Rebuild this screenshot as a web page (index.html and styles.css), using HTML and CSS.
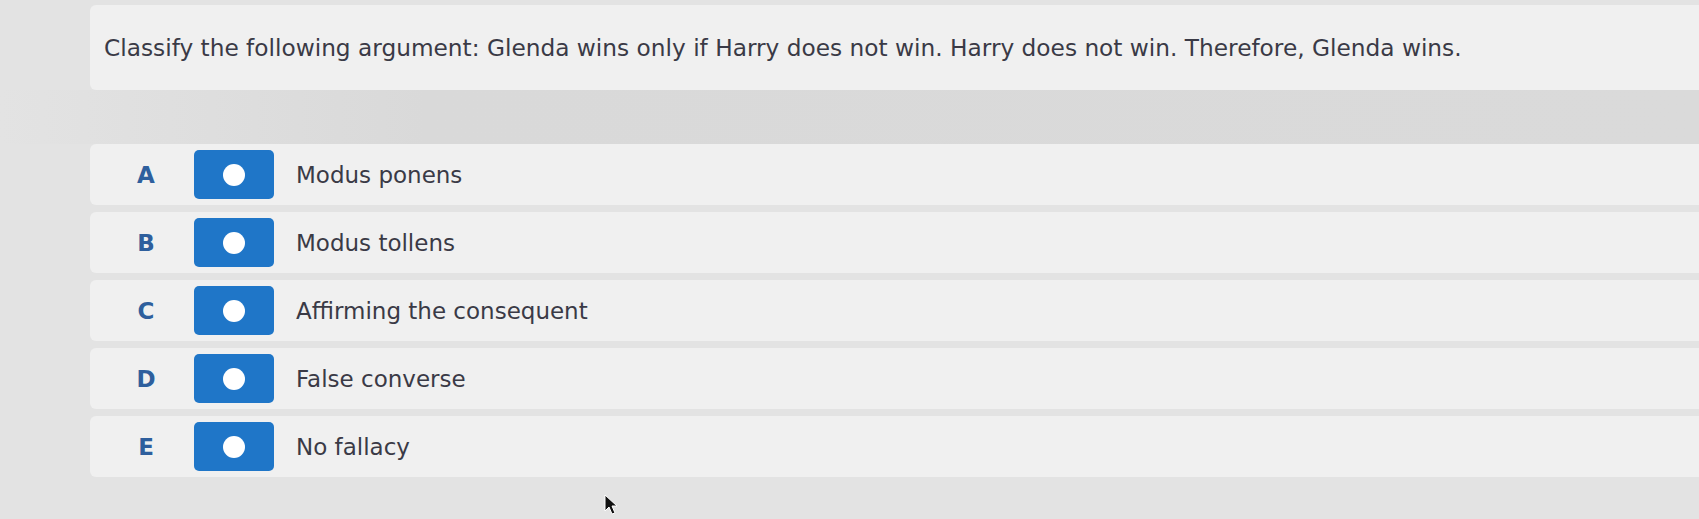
FILE: index.html
```html
<!DOCTYPE html>
<html lang="en">
<head>
  <meta charset="UTF-8">
  <title>Question</title>
  <link rel="stylesheet" href="styles.css">
</head>
<body>
  <div class="page">
    <div class="question">
      Classify the following argument: Glenda wins only if Harry does not win. Harry does not win. Therefore, Glenda wins.
    </div>
    <div class="band"></div>

    <div class="options">
      <div class="option">
        <div class="letter">A</div>
        <button class="pick"><span class="dot"></span></button>
        <div class="answer">Modus ponens</div>
      </div>
      <div class="option">
        <div class="letter">B</div>
        <button class="pick"><span class="dot"></span></button>
        <div class="answer">Modus tollens</div>
      </div>
      <div class="option">
        <div class="letter">C</div>
        <button class="pick"><span class="dot"></span></button>
        <div class="answer">Affirming the consequent</div>
      </div>
      <div class="option">
        <div class="letter">D</div>
        <button class="pick"><span class="dot"></span></button>
        <div class="answer">False converse</div>
      </div>
      <div class="option">
        <div class="letter">E</div>
        <button class="pick"><span class="dot"></span></button>
        <div class="answer">No fallacy</div>
      </div>
    </div>
  </div>

  <svg class="cursor" width="14" height="22" viewBox="0 0 14 22">
    <path d="M1 1 L1 17 L5 13 L8 20 L11 19 L8 12 L13 12 Z" fill="#111" stroke="#fff" stroke-width="1"/>
  </svg>
</body>
</html>
```

FILE: styles.css
```css
body { margin: 0; padding: 0; background: #e3e3e3; font-family: "DejaVu Sans", Verdana, sans-serif; color: #3a3a46; }
.page { padding-left: 90px; padding-top: 5px; }
.question { background: #f0f0f0; height: 85px; padding-left: 14px; display: flex; align-items: center; font-size: 23.25px; border-radius: 6px 0 0 6px; white-space: nowrap; }
.band { height: 54px; background: linear-gradient(to right, #e3e3e3, #d9d9d9 25%, #dadada); margin-left: -90px; }
.options { display: flex; flex-direction: column; gap: 7px; }
.option { background: #f0f0f0; height: 61px; border-radius: 6px 0 0 6px; display: grid; grid-template-columns: 52px 80px 1fr; column-gap: 22px; align-items: center; padding-left: 30px; }
.letter { text-align: center; font-weight: bold; font-size: 23px; color: #2e5f9d; }
.pick { width: 80px; height: 49px; background: #1f76c8; border: none; border-radius: 5px; display: flex; align-items: center; justify-content: center; padding: 0; }
.dot { width: 22px; height: 22px; border-radius: 50%; background: #fff; }
.answer { font-size: 23px; }
.cursor { position: absolute; left: 604px; top: 494px; }
```
